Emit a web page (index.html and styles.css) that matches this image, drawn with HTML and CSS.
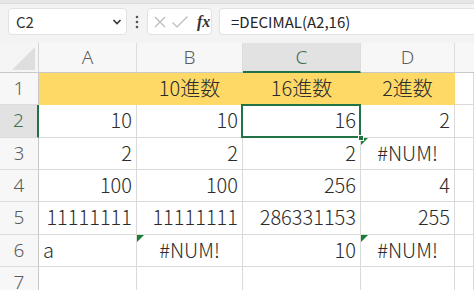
FILE: index.html
```html
<!DOCTYPE html>
<html lang="ja">
<head>
<meta charset="utf-8">
<link rel="stylesheet" href="styles.css">
</head>
<body>
<div class="app">
  <div class="topband"></div>
  <div class="toolbar">
    <div class="namebox">
      <span class="name">C2</span>
      <svg class="chev" width="10" height="8" viewBox="0 0 10 8"><path d="M1.5 2 L5 5.5 L8.5 2" fill="none" stroke="#333" stroke-width="1.6"/></svg>
    </div>
    <svg class="dots" width="6" height="16" viewBox="0 0 6 16"><circle cx="3" cy="3" r="1.3" fill="#555"/><circle cx="3" cy="8" r="1.3" fill="#555"/><circle cx="3" cy="13" r="1.3" fill="#555"/></svg>
    <div class="fxbtns">
      <svg width="14" height="14" viewBox="0 0 14 14"><path d="M2 2 L12 12 M12 2 L2 12" fill="none" stroke="#b9b9b9" stroke-width="1.1"/></svg>
      <svg width="18" height="14" viewBox="0 0 18 14"><path d="M1.5 7.5 L6 12 L16.5 1.5" fill="none" stroke="#b9b9b9" stroke-width="1.1"/></svg>
      <span class="fx">fx</span>
    </div>
    <div class="formula">=DECIMAL(A2,16)</div>
  </div>
  <div class="sheet">
    <div class="corner"><div class="tri"></div></div>
    <div class="ch">A</div>
    <div class="ch">B</div>
    <div class="ch sel">C</div>
    <div class="ch">D</div>
    <div class="ch rest"></div>

    <div class="rh">1</div>
    <div class="c y"></div>
    <div class="c y ctr">10進数</div>
    <div class="c y ctr">16進数</div>
    <div class="c y ctr">2進数</div>
    <div class="c"></div>

    <div class="rh sel">2</div>
    <div class="c r">10</div>
    <div class="c r">10</div>
    <div class="c r active">16<div class="selbox"></div><div class="handle"></div></div>
    <div class="c r">2</div>
    <div class="c"></div>

    <div class="rh">3</div>
    <div class="c r">2</div>
    <div class="c r">2</div>
    <div class="c r">2</div>
    <div class="c ctr err">#NUM!</div>
    <div class="c"></div>

    <div class="rh">4</div>
    <div class="c r">100</div>
    <div class="c r">100</div>
    <div class="c r">256</div>
    <div class="c r">4</div>
    <div class="c"></div>

    <div class="rh">5</div>
    <div class="c r">11111111</div>
    <div class="c r">11111111</div>
    <div class="c r">286331153</div>
    <div class="c r">255</div>
    <div class="c"></div>

    <div class="rh">6</div>
    <div class="c">a</div>
    <div class="c ctr err">#NUM!</div>
    <div class="c r">10</div>
    <div class="c ctr err">#NUM!</div>
    <div class="c"></div>

    <div class="rh">7</div>
    <div class="c"></div>
    <div class="c"></div>
    <div class="c"></div>
    <div class="c"></div>
    <div class="c"></div>
  </div>
</div>
</body>
</html>
```
FILE: styles.css
```css
* { box-sizing: border-box; }
html, body { margin: 0; padding: 0; }
body {
  width: 474px;
  height: 290px;
  overflow: hidden;
  background: #ffffff;
  font-family: "Noto Sans CJK JP", "Noto Sans", sans-serif;
  color: #2b2b2b;
}
.app { display: flex; flex-direction: column; }
.topband {
  height: 4px;
  background: #e6e6e6;
  border-bottom: 1px solid #dcdcdc;
}
.toolbar {
  background: #f3f3f3;
  display: flex;
  align-items: center;
  padding: 4px 0 8px 8px;
  height: 39px;
}
.namebox {
  width: 119px;
  height: 27px;
  background: #fff;
  border: 1px solid #e2e2e2;
  border-radius: 4px;
  display: flex;
  align-items: center;
  justify-content: space-between;
  padding: 0 4px 0 7px;
}
.name { font-size: 15px; line-height: 1; color: #333; }
.chev { margin-top: 1px; }
.dots { margin-left: 7px; margin-right: 7px; }
.fxbtns {
  width: 65px;
  height: 27px;
  background: #fff;
  border: 1px solid #e2e2e2;
  border-radius: 4px;
  display: flex;
  align-items: center;
  padding: 0 0 0 5px;
  gap: 4px;
}
.fx {
  font-family: "Liberation Serif", serif;
  font-style: italic;
  font-weight: bold;
  font-size: 16px;
  line-height: 1;
  color: #333;
  margin-left: 4px;
}
.formula {
  flex: 1;
  margin-left: 7px;
  height: 27px;
  background: #fff;
  border: 1px solid #e2e2e2;
  border-right: none;
  border-radius: 4px 0 0 4px;
  display: flex;
  align-items: center;
  padding-left: 11px;
  font-size: 15px;
  color: #262626;
}
.sheet {
  display: grid;
  grid-template-columns: 39px 98px 106px 118px 94px 1fr;
  grid-template-rows: 30px repeat(7, 32.33px);
  font-size: 20px;
  font-weight: 300;
  line-height: 1;
}
.corner {
  background: #f5f5f5;
  border-right: 1px solid #d4d4d4;
  border-bottom: 1px solid #c8c8c8;
  position: relative;
}
.tri {
  position: absolute;
  right: 3px;
  bottom: 2px;
  width: 0;
  height: 0;
  border-bottom: 23px solid #dedede;
  border-left: 23px solid transparent;
}
.ch {
  background: #f7f7f7;
  border-right: 1px solid #dcdcdc;
  border-bottom: 1px solid #c8c8c8;
  display: flex;
  align-items: center;
  justify-content: center;
  color: #5c5c5c;
  font-family: "Noto Sans", sans-serif;
  font-size: 19px;
}
.ch.sel {
  background: #e2e2e2;
  border-bottom: 2px solid #217346;
  color: #3f6e52;
}
.ch.rest { border-right: none; }
.rh {
  background: #f7f7f7;
  border-right: 1px solid #c8c8c8;
  border-bottom: 1px solid #dcdcdc;
  display: flex;
  align-items: center;
  justify-content: center;
  color: #5c5c5c;
  font-family: "Noto Sans", sans-serif;
  font-size: 19px;
}
.rh.sel {
  background: #e2e2e2;
  border-right: 2px solid #217346;
  color: #3f6e52;
}
.c {
  position: relative;
  border-right: 1px solid #dadada;
  border-bottom: 1px solid #dadada;
  display: flex;
  align-items: center;
  padding: 0 4px 1px 4px;
  white-space: nowrap;
}
.c.r { justify-content: flex-end; }
.c.ctr { justify-content: center; }
.c.y {
  background: #ffd966;
  border-right-color: #ffd966;
  border-bottom-color: #ffd966;
}
.selbox {
  position: absolute;
  left: -2px;
  top: -1px;
  right: -1px;
  bottom: -1px;
  border: 2px solid #217346;
  pointer-events: none;
}
.handle {
  position: absolute;
  right: -4px;
  bottom: -4px;
  width: 6px;
  height: 6px;
  background: #217346;
  border: 1px solid #fff;
  z-index: 2;
}
.err::before {
  content: "";
  position: absolute;
  left: 0;
  top: 0;
  width: 0;
  height: 0;
  border-top: 7px solid #1b7d33;
  border-right: 7px solid transparent;
}
```
